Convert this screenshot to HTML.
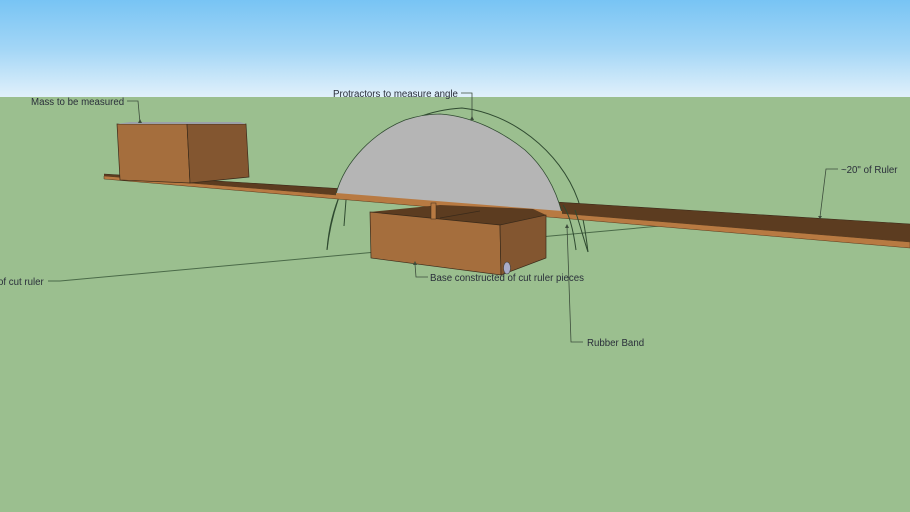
<!DOCTYPE html>
<html><head><meta charset="utf-8"><style>
html,body{margin:0;padding:0;width:910px;height:512px;overflow:hidden}
svg{display:block}
text{font-family:"Liberation Sans",sans-serif;font-size:9.7px;fill:#2a2f3a}
</style></head><body>
<svg width="910" height="512" viewBox="0 0 910 512" xmlns="http://www.w3.org/2000/svg">
<defs>
<linearGradient id="sky" x1="0" y1="0" x2="0" y2="1">
<stop offset="0" stop-color="#78c4f4"/><stop offset="0.5" stop-color="#a3d6f6"/><stop offset="1" stop-color="#e2f1fb"/>
</linearGradient>
</defs>
<rect x="0" y="0" width="910" height="98" fill="url(#sky)"/>
<rect x="0" y="97" width="910" height="415" fill="#9bbf8f"/>

<polyline points="48,281 60,281 660,226" fill="none" stroke="#4a6a48" stroke-width="1"/>

<path d="M327,250 C330,210 345,170 380,140 C405,120 430,110 462,108 C510,113 560,150 578,200 C583,215 586,235 588,252" fill="none" stroke="#2f4a30" stroke-width="1"/>

<polygon points="104,174 910,224 910,242 104,176" fill="#5c3c20"/>
<polygon points="104,176 910,242 910,248 104,179" fill="#b87a42" stroke="#5a3a1e" stroke-width="0.5"/>
<line x1="104" y1="174" x2="910" y2="224" stroke="#3a2818" stroke-width="0.6"/>

<polygon points="117,124 187,124 190,183 120,180" fill="#a56e3d" stroke="#3a2a1a" stroke-width="0.7"/>
<polygon points="187,124 246,124 249,177 190,183" fill="#835630" stroke="#3a2a1a" stroke-width="0.7"/>
<polygon points="117,124 130,122 240,122 246,124" fill="#9aa0a8"/>

<path d="M336,194 C345,160 375,132 405,120 C420,115 432,114 440,114 C470,116 500,130 525,150 C545,168 556,190 562,213 Z" fill="#b5b5b5" stroke="#2f4a30" stroke-width="0.8"/>
<line x1="346" y1="200" x2="344" y2="226" stroke="#2f4a30" stroke-width="1"/>
<path d="M563,205 C570,215 574,235 576,250" fill="none" stroke="#2f4a30" stroke-width="1"/>

<polygon points="336,193 562,211 562,216 336,197" fill="#b87a42"/>

<polygon points="370,212 440,205 533,209 546,215 500,225" fill="#5c3c20"/>
<polygon points="370,212 500,225 501,275 371,258" fill="#a56e3d" stroke="#3a2a1a" stroke-width="0.7"/>
<polygon points="500,225 546,215 546,258 501,275" fill="#835630" stroke="#3a2a1a" stroke-width="0.7"/>
<line x1="440" y1="218" x2="480" y2="211" stroke="#3a2a1a" stroke-width="0.7"/>
<rect x="431" y="203" width="5" height="16" fill="#b87a42" stroke="#3a2a1a" stroke-width="0.5"/>
<ellipse cx="507" cy="268" rx="3.5" ry="6" fill="#a9acc8" stroke="#444" stroke-width="0.6"/>

<path d="M327,250 C329,232 333,215 338,200" fill="none" stroke="#2f4a30" stroke-width="1"/>
<path d="M575,210 C580,225 584,240 588,252" fill="none" stroke="#2f4a30" stroke-width="1"/>

<g fill="none" stroke="#3d4d3c" stroke-width="0.8">
<polyline points="127,101 138,101 140,123"/>
<polyline points="461,93 472,93 472,120"/>
<polyline points="838,169 826,169 820,217"/>
<polyline points="428,277 416,277 415,264"/>
<polyline points="583,342 571,342 567,226"/>
</g>
<g fill="#3d4d3c">
<polygon points="138,123 142,123 140,119"/>
<polygon points="470,120 474,120 472,116"/>
<polygon points="818,216 822,216 820,219"/>
<polygon points="413,265 417,265 415,261"/>
<polygon points="565,228 569,228 567,224"/>
</g>

<text x="31" y="105">Mass to be measured</text>
<text x="333" y="97">Protractors to measure angle</text>
<text x="841" y="173">~20" of Ruler</text>
<text x="430" y="281">Base constructed of cut ruler pieces</text>
<text x="587" y="346">Rubber Band</text>
<text x="-2" y="285">of cut ruler</text>
</svg>
</body></html>
